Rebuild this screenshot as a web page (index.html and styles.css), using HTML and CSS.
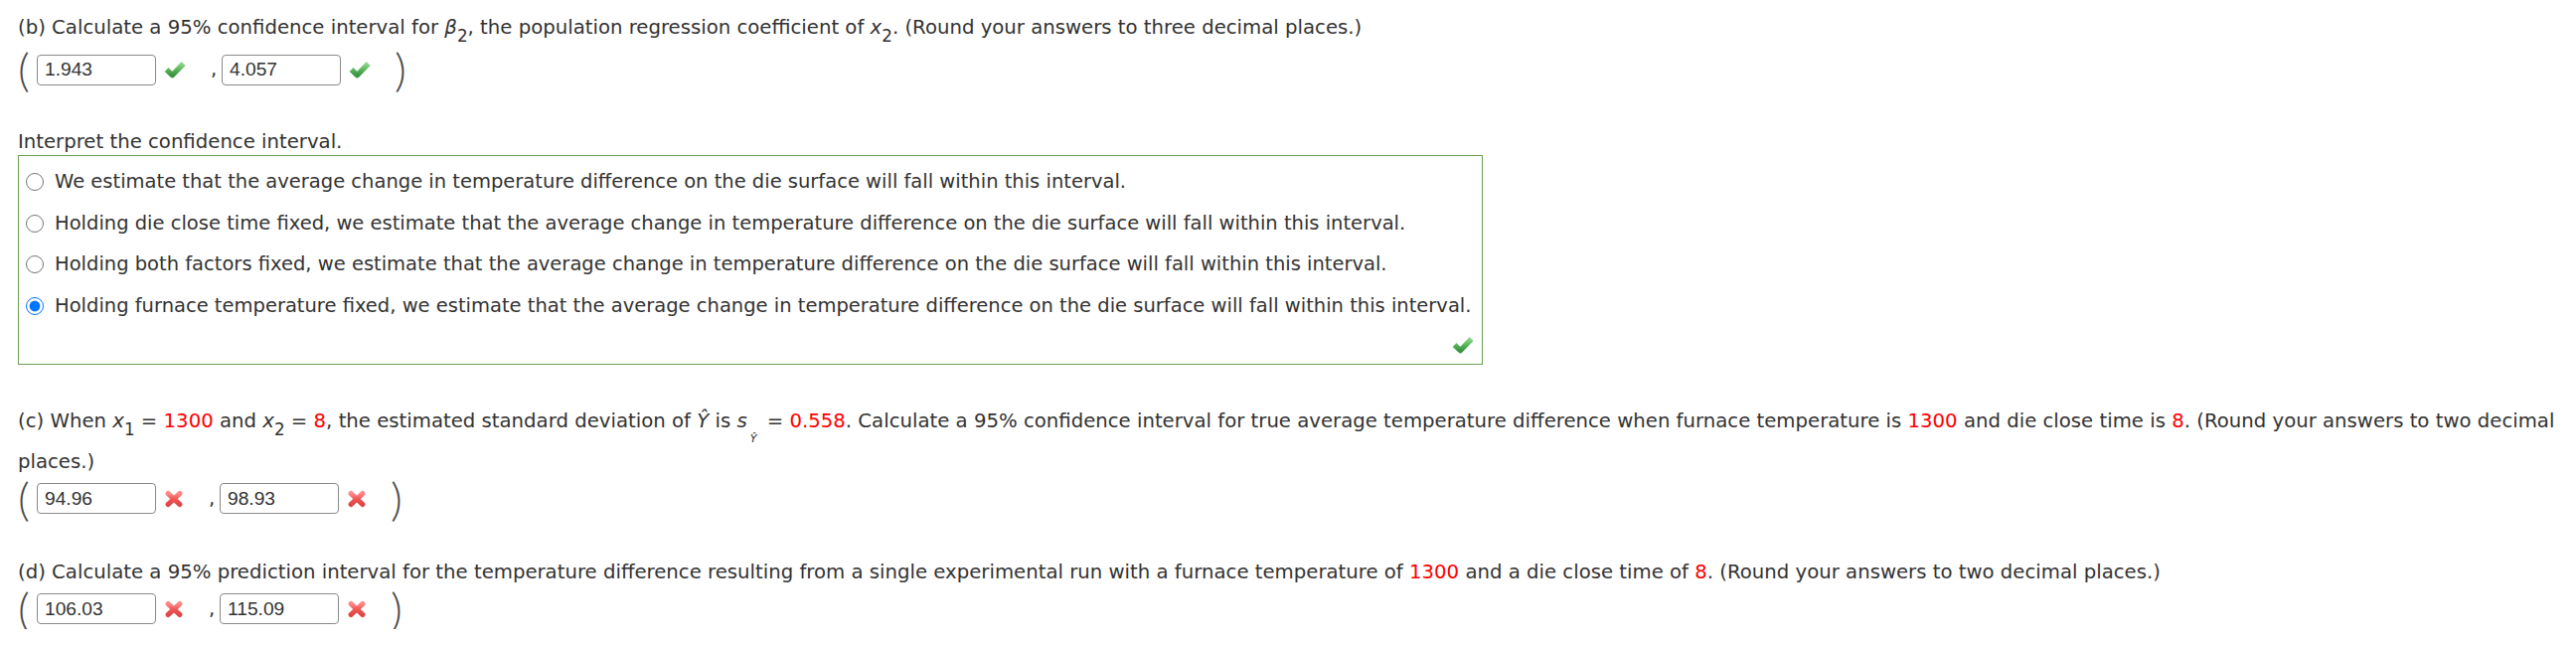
FILE: index.html
```html
<!DOCTYPE html>
<html lang="en">
<head>
<meta charset="utf-8">
<title>Regression intervals</title>
<link rel="stylesheet" href="styles.css">
</head>
<body>
<svg class="defs" width="0" height="0" aria-hidden="true">
  <defs>
    <linearGradient id="gOk" x1="0" y1="0" x2="0" y2="1">
      <stop offset="0" stop-color="#8fd68c"/>
      <stop offset="0.5" stop-color="#5cb85c"/>
      <stop offset="1" stop-color="#3a9443"/>
    </linearGradient>
    <linearGradient id="gNo" x1="0" y1="0" x2="0" y2="1">
      <stop offset="0" stop-color="#ff8a8a"/>
      <stop offset="0.5" stop-color="#f25757"/>
      <stop offset="1" stop-color="#e04646"/>
    </linearGradient>
  </defs>
</svg>
<div class="page">
  <p class="q q-b">(b) Calculate a 95% confidence interval for <i class="m">β</i><sub>2</sub>, the population regression coefficient of <i class="m">x</i><sub>2</sub>. (Round your answers to three decimal places.)</p>
  <div class="answer ans-b">
    <span class="paren">(</span>
    <input class="box" type="text" value="1.943" readonly>
    <svg class="ok" viewBox="0 0 22 18" width="22" height="18"><path d="M2.6 9 L8.4 14.6 L19.6 3" fill="none" stroke="url(#gOk)" stroke-width="5.4" stroke-linejoin="round"/></svg>
    <span class="comma">,</span>
    <input class="box" type="text" value="4.057" readonly>
    <svg class="ok" viewBox="0 0 22 18" width="22" height="18"><path d="M2.6 9 L8.4 14.6 L19.6 3" fill="none" stroke="url(#gOk)" stroke-width="5.4" stroke-linejoin="round"/></svg>
    <span class="paren paren-r">)</span>
  </div>

  <p class="q q-interp">Interpret the confidence interval.</p>
  <div class="choices">
    <label class="choice"><input type="radio" name="interp"> We estimate that the average change in temperature difference on the die surface will fall within this interval.</label>
    <label class="choice"><input type="radio" name="interp"> Holding die close time fixed, we estimate that the average change in temperature difference on the die surface will fall within this interval.</label>
    <label class="choice"><input type="radio" name="interp"> Holding both factors fixed, we estimate that the average change in temperature difference on the die surface will fall within this interval.</label>
    <label class="choice"><input type="radio" name="interp" checked> Holding furnace temperature fixed, we estimate that the average change in temperature difference on the die surface will fall within this interval.</label>
    <div class="choices-mark">
      <svg class="ok" viewBox="0 0 22 18" width="22" height="18"><path d="M2.6 9 L8.4 14.6 L19.6 3" fill="none" stroke="url(#gOk)" stroke-width="5.4" stroke-linejoin="round"/></svg>
    </div>
  </div>

  <p class="q q-c">(c) When <i class="m">x</i><sub>1</sub> = <span class="red">1300</span> and <i class="m">x</i><sub>2</sub> = <span class="red">8</span>, the estimated standard deviation of <i class="m">Ŷ</i> is <i class="m">s</i><sub class="hatsub"><i class="m">Ŷ</i></sub> = <span class="red">0.558</span>. Calculate a 95% confidence interval for true average temperature difference when furnace temperature is <span class="red">1300</span> and die close time is <span class="red">8</span>. (Round your answers to two decimal<br>places.)</p>
  <div class="answer ans-c">
    <span class="paren">(</span>
    <input class="box" type="text" value="94.96" readonly>
    <svg class="no" viewBox="0 0 20 18" width="20" height="18"><path d="M4.2 3.6 L15.8 14.4 M15.8 3.6 L4.2 14.4" fill="none" stroke="url(#gNo)" stroke-width="5.2" stroke-linecap="round"/></svg>
    <span class="comma">,</span>
    <input class="box" type="text" value="98.93" readonly>
    <svg class="no" viewBox="0 0 20 18" width="20" height="18"><path d="M4.2 3.6 L15.8 14.4 M15.8 3.6 L4.2 14.4" fill="none" stroke="url(#gNo)" stroke-width="5.2" stroke-linecap="round"/></svg>
    <span class="paren paren-r">)</span>
  </div>

  <p class="q q-d">(d) Calculate a 95% prediction interval for the temperature difference resulting from a single experimental run with a furnace temperature of <span class="red">1300</span> and a die close time of <span class="red">8</span>. (Round your answers to two decimal places.)</p>
  <div class="answer ans-d">
    <span class="paren">(</span>
    <input class="box" type="text" value="106.03" readonly>
    <svg class="no" viewBox="0 0 20 18" width="20" height="18"><path d="M4.2 3.6 L15.8 14.4 M15.8 3.6 L4.2 14.4" fill="none" stroke="url(#gNo)" stroke-width="5.2" stroke-linecap="round"/></svg>
    <span class="comma">,</span>
    <input class="box" type="text" value="115.09" readonly>
    <svg class="no" viewBox="0 0 20 18" width="20" height="18"><path d="M4.2 3.6 L15.8 14.4 M15.8 3.6 L4.2 14.4" fill="none" stroke="url(#gNo)" stroke-width="5.2" stroke-linecap="round"/></svg>
    <span class="paren paren-r">)</span>
  </div>
</div>
</body>
</html>
```

FILE: styles.css
```css
html, body {
  margin: 0;
  padding: 0;
  background: #ffffff;
}

.defs {
  display: block;
  width: 0;
  height: 0;
  overflow: hidden;
}

.page {
  padding: 16px 18px 0 18px;
  font-family: "DejaVu Sans", Verdana, sans-serif;
  font-size: 19.7px;
  line-height: 24px;
  color: #333333;
}

.q {
  margin: 0;
  white-space: nowrap;
}

.m {
  font-style: italic;
}

sub {
  font-size: 0.85em;
  vertical-align: -0.45em;
  line-height: 0;
}

.hatsub {
  font-size: 11px;
  vertical-align: -15px;
  margin: 0 4px 0 3px;
}

.red {
  color: #ff0000;
}

/* answer rows */
.answer {
  display: flex;
  align-items: center;
  height: 40px;
}

.ans-b { margin-top: 10px; }
.ans-c { margin-top: -3px; }
.ans-d { margin-top: 5px; }

.paren {
  display: block;
  width: 19px;
  font-family: Lato, "Liberation Sans", sans-serif;
  font-weight: 300;
  font-size: 46px;
  line-height: 40px;
  color: #4a4a4a;
}

.paren-r {
  margin-left: 24px;
}

.box {
  box-sizing: border-box;
  width: 120px;
  height: 31px;
  margin: 0;
  padding: 0 0 0 7px;
  border: 1px solid #8a8a8a;
  border-radius: 4px;
  background: #ffffff;
  font-family: "Liberation Sans", Arial, sans-serif;
  font-size: 19.2px;
  color: #333333;
  outline: none;
}

.ok, .no {
  display: block;
  flex: none;
  margin-left: 8px;
}

.comma {
  display: block;
  margin-left: 25px;
  width: 11px;
}

/* interpretation */
.q-interp {
  margin-top: 41px;
}

.choices {
  margin-top: 1px;
  width: 1474px;
  box-sizing: border-box;
  border: 1px solid #6a9f50;
  padding: 5px 8px 0 6px;
}

.choice {
  display: flex;
  align-items: center;
  height: 41.7px;
  font-size: 19.5px;
  white-space: nowrap;
}

.choice input {
  width: 18px;
  height: 18px;
  margin: 0 11px 0 1px;
  flex: none;
}

.choices-mark {
  display: flex;
  justify-content: flex-end;
  align-items: flex-end;
  height: 37px;
  padding-bottom: 10px;
  box-sizing: border-box;
}

.q-c {
  margin-top: 36px;
  line-height: 41px;
}

.q-d {
  margin-top: 42px;
}
```
